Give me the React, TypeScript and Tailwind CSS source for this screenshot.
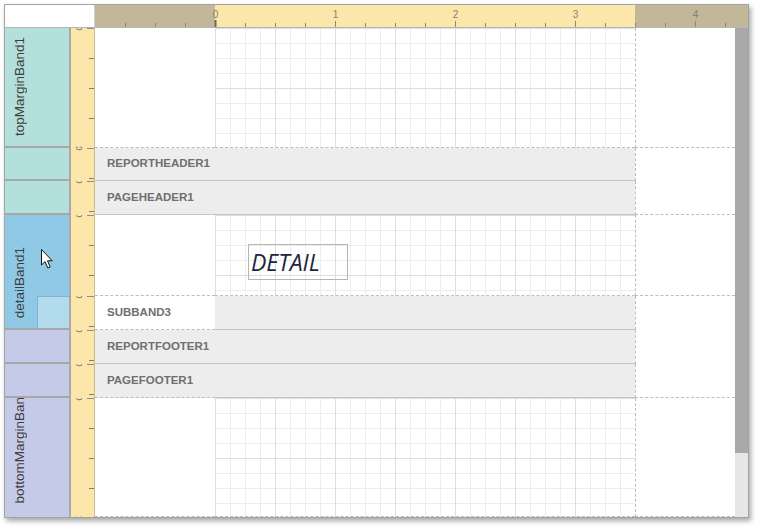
import type { ReactNode } from 'react';

type Edge = 'solid' | 'dashed' | 'none';

interface Band {
  id: string;
  h: number;
  hCls: string;
  kind: 'margin' | 'area' | 'sub';
  label?: string;
  edge: [Edge, Edge, Edge];
}

const bands: Band[] = [
  { id: 'topMargin', h: 120, hCls: 'h-[120px]', kind: 'margin', edge: ['dashed', 'dashed', 'dashed'] },
  { id: 'reportHeader', h: 33, hCls: 'h-[33px]', kind: 'area', label: 'REPORTHEADER1', edge: ['solid', 'solid', 'none'] },
  { id: 'pageHeader', h: 34, hCls: 'h-[34px]', kind: 'area', label: 'PAGEHEADER1', edge: ['solid', 'solid', 'dashed'] },
  { id: 'detail', h: 81, hCls: 'h-[81px]', kind: 'margin', edge: ['dashed', 'dashed', 'dashed'] },
  { id: 'subBand', h: 34, hCls: 'h-[34px]', kind: 'sub', label: 'SUBBAND3', edge: ['dashed', 'solid', 'none'] },
  { id: 'reportFooter', h: 34, hCls: 'h-[34px]', kind: 'area', label: 'REPORTFOOTER1', edge: ['solid', 'solid', 'none'] },
  { id: 'pageFooter', h: 34, hCls: 'h-[34px]', kind: 'area', label: 'PAGEFOOTER1', edge: ['dashed', 'solid', 'dashed'] },
  { id: 'bottomMargin', h: 119, hCls: 'h-[119px]', kind: 'margin', edge: ['dashed', 'dashed', 'dashed'] },
];

const edgeCls: Record<Edge, string> = {
  solid: 'border-b border-solid border-[#c5c5c5]',
  dashed: 'border-b border-dashed border-[#bdbdbd]',
  none: '',
};

const grid =
  'bg-white [background-image:linear-gradient(to_right,#dedede_1px,transparent_1px),linear-gradient(to_bottom,#dedede_1px,transparent_1px),linear-gradient(to_right,#ededed_1px,transparent_1px),linear-gradient(to_bottom,#ededed_1px,transparent_1px)] [background-size:60px_60px,60px_60px,15px_15px,15px_15px]';

const rulerFont = 'Liberation Sans, Arial, sans-serif';

function TopRuler() {
  const ticks: number[] = [];
  for (let x = 30; x < 653; x += 30) ticks.push(x);

  return (
    <div className="relative flex flex-1">
      <div className="w-[120px] bg-[#c3b799]" />
      <div className="w-[420px] bg-[#fde6a9]" />
      <div className="flex-1 bg-[#c3b799]" />
      <svg className="absolute inset-0" width={653} height={22}>
        {ticks.map((x) => {
          const inch = x >= 120 && (x - 120) % 120 === 0;
          return (
            <g key={x}>
              <line
                x1={x + 0.5}
                x2={x + 0.5}
                y1={x === 120 ? 15 : inch ? 16 : 18}
                y2={22}
                stroke={x === 120 ? '#6f6a5c' : '#8f8873'}
                strokeWidth={x === 120 ? 2 : 1}
              />
              {inch && (
                <text x={x + 0.5} y={12.5} fontSize={10} textAnchor="middle" fill="#808080" fontFamily={rulerFont}>
                  {(x - 120) / 120}
                </text>
              )}
            </g>
          );
        })}
      </svg>
    </div>
  );
}

function SideRuler({ h }: { h: number }) {
  const ticks: number[] = [];
  for (let y = 30; y < h; y += 30) ticks.push(y);
  const marks = [0, 120];

  return (
    <svg className="block shrink-0" width={23} height={h}>
      <line x1={16} x2={23} y1={0.5} y2={0.5} stroke="#8d8d8d" />
      {ticks.map((y) => (
        <line key={y} x1={18} x2={23} y1={y + 0.5} y2={y + 0.5} stroke="#7d7d7d" />
      ))}
      {marks.map((y, i) => (
        <text
          key={y}
          transform={`translate(7.5 ${y}) rotate(90)`}
          fontSize={9}
          textAnchor="middle"
          dominantBaseline="central"
          fill="#7a7a7a"
          fontFamily={rulerFont}
        >
          {i}
        </text>
      ))}
    </svg>
  );
}

function SideLabel({ children, pb }: { children: ReactNode; pb: string }) {
  return (
    <div className={`flex h-full min-h-0 flex-col justify-end overflow-hidden pl-2 ${pb}`}>
      <span className="shrink-0 rotate-180 whitespace-nowrap text-[13.5px] leading-[14px] text-[#3d3d3d] [writing-mode:vertical-rl] [font-family:'Liberation_Sans',Arial,sans-serif]">
        {children}
      </span>
    </div>
  );
}

function Cursor() {
  return (
    <svg className="absolute left-[35px] top-[33px]" width={14} height={22} viewBox="0 0 14 22">
      <path
        d="M1.5 1.5 L1.5 17 L5 13.6 L7.8 20 L10.2 19 L7.5 12.8 L12.2 12.8 Z"
        fill="#ffffff"
        stroke="#111111"
        strokeWidth={1}
        strokeLinejoin="round"
      />
    </svg>
  );
}

function LabelColumn() {
  const sep = 'shrink-0 border-b-2 border-[#a7a7a7]';
  return (
    <div className="flex h-[489px] w-[66px] shrink-0 flex-col overflow-hidden border-r-2 border-[#a9a9a9]">
      <div className={`h-[120px] bg-[#b3e0da] ${sep}`}>
        <SideLabel pb="pb-[10px]">topMarginBand1</SideLabel>
      </div>
      <div className={`h-[33px] bg-[#b3e0da] ${sep}`} />
      <div className={`h-[34px] bg-[#b3e0da] ${sep}`} />
      <div className={`relative flex h-[115px] bg-[#8fc9e5] ${sep}`}>
        <div className="w-[32px]">
          <SideLabel pb="pb-[10px]">detailBand1</SideLabel>
        </div>
        <div className="flex flex-1 flex-col justify-end">
          <div className="h-[32px] border-l border-t border-[#86b3ca] bg-[#b2dcee]" />
        </div>
        <Cursor />
      </div>
      <div className={`h-[34px] bg-[#c5cae8] ${sep}`} />
      <div className={`h-[34px] bg-[#c5cae8] ${sep}`} />
      <div className="h-[119px] shrink-0 overflow-hidden bg-[#c5cae8]">
        <SideLabel pb="pb-[13px]">bottomMarginBand1</SideLabel>
      </div>
    </div>
  );
}

function BandRow({ band }: { band: Band }) {
  const gray = 'bg-[#ededed]';
  const leftBg = band.kind === 'area' ? gray : 'bg-white';
  const midBg = band.kind === 'margin' ? grid : gray;

  return (
    <div className={`flex shrink-0 ${band.hCls}`}>
      <div className={`flex w-[120px] items-center pl-3 ${leftBg} ${edgeCls[band.edge[0]]}`}>
        {band.label && (
          <span className="whitespace-nowrap text-[11.5px] font-bold text-[#6f6f6f] [font-family:'Liberation_Sans',Arial,sans-serif]">
            {band.label}
          </span>
        )}
      </div>
      <div className={`relative w-[420px] ${midBg} ${edgeCls[band.edge[1]]}`}>
        {band.id === 'detail' && (
          <div className="absolute left-[33px] top-[29px] flex h-[36px] w-[100px] items-center border border-[#b5b5b5] pl-[2px]">
            <span className="text-[23px] font-normal italic leading-none text-[#1f2540] [font-family:'Open_Sans',sans-serif]">
              DETAIL
            </span>
          </div>
        )}
      </div>
      <div
        className={`w-[100px] border-l border-dashed border-[#bdbdbd] bg-white ${
          band.edge[2] === 'dashed' ? 'border-b' : ''
        }`}
      />
    </div>
  );
}

export default function App() {
  return (
    <div className="h-[530px] w-[761px] bg-white pl-[4px] pt-[4px]">
      <div className="flex h-[514px] w-[745px] flex-col border border-[#a3a3a3] bg-white shadow-[2px_3px_5px_rgba(0,0,0,0.35)]">
        <div className="flex h-[23px] shrink-0 border-b border-[#b6b6b6]">
          <div className="w-[90px] border-r border-[#cfcfcf] bg-white" />
          <TopRuler />
        </div>

        <div className="flex h-[489px]">
          <LabelColumn />

          <div className="flex w-[24px] shrink-0 flex-col border-r border-[#c9bb92] bg-[#fde6a9]">
            {bands.map((b) => (
              <SideRuler key={b.id} h={b.h} />
            ))}
          </div>

          <div className="flex w-[640px] shrink-0 flex-col">
            {bands.map((b) => (
              <BandRow key={b.id} band={b} />
            ))}
          </div>

          <div className="flex w-[13px] shrink-0 flex-col">
            <div className="h-[425px] bg-[#a8a8a8]" />
            <div className="flex-1 bg-[#e6e6e6]" />
          </div>
        </div>
      </div>
    </div>
  );
}
